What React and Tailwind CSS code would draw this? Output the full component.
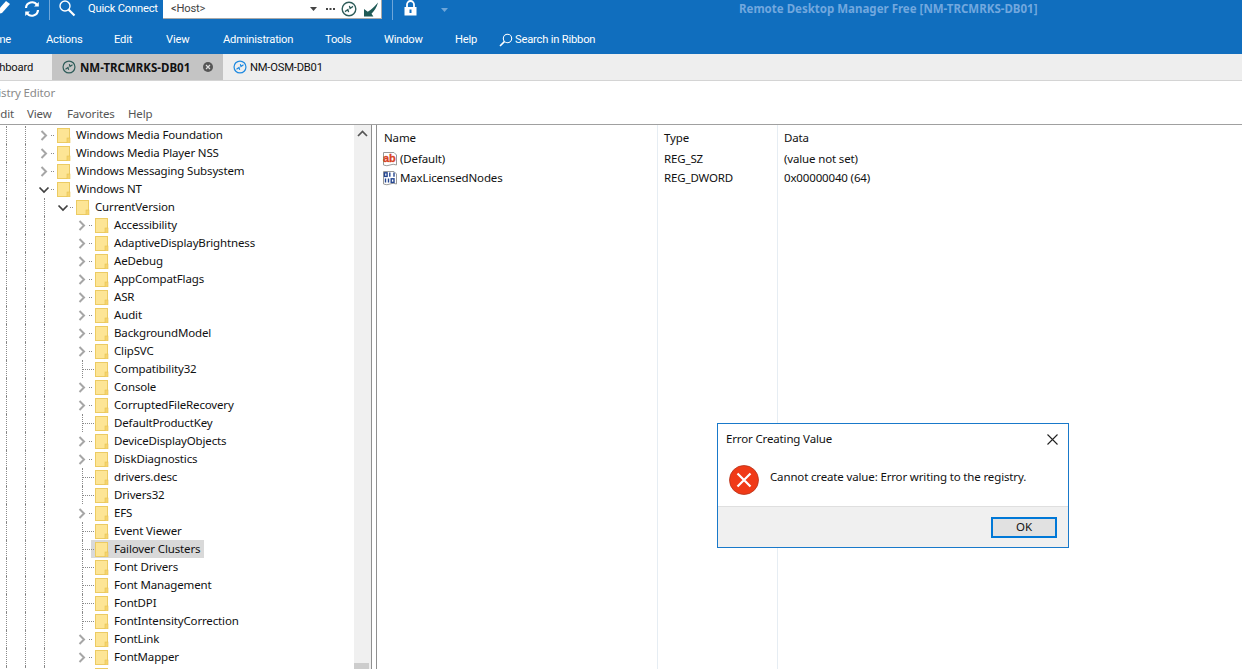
import React from 'react';

const treeRows = [
  { level: 2, kind: 'closed', label: 'Windows Media Foundation' },
  { level: 2, kind: 'closed', label: 'Windows Media Player NSS' },
  { level: 2, kind: 'closed', label: 'Windows Messaging Subsystem' },
  { level: 2, kind: 'open', label: 'Windows NT' },
  { level: 3, kind: 'open', label: 'CurrentVersion' },
  { level: 4, kind: 'closed', label: 'Accessibility' },
  { level: 4, kind: 'closed', label: 'AdaptiveDisplayBrightness' },
  { level: 4, kind: 'closed', label: 'AeDebug' },
  { level: 4, kind: 'closed', label: 'AppCompatFlags' },
  { level: 4, kind: 'closed', label: 'ASR' },
  { level: 4, kind: 'closed', label: 'Audit' },
  { level: 4, kind: 'closed', label: 'BackgroundModel' },
  { level: 4, kind: 'closed', label: 'ClipSVC' },
  { level: 4, kind: 'leaf', label: 'Compatibility32' },
  { level: 4, kind: 'closed', label: 'Console' },
  { level: 4, kind: 'closed', label: 'CorruptedFileRecovery' },
  { level: 4, kind: 'leaf', label: 'DefaultProductKey' },
  { level: 4, kind: 'closed', label: 'DeviceDisplayObjects' },
  { level: 4, kind: 'closed', label: 'DiskDiagnostics' },
  { level: 4, kind: 'leaf', label: 'drivers.desc' },
  { level: 4, kind: 'leaf', label: 'Drivers32' },
  { level: 4, kind: 'closed', label: 'EFS' },
  { level: 4, kind: 'leaf', label: 'Event Viewer' },
  { level: 4, kind: 'leaf', label: 'Failover Clusters', selected: true },
  { level: 4, kind: 'leaf', label: 'Font Drivers' },
  { level: 4, kind: 'leaf', label: 'Font Management' },
  { level: 4, kind: 'leaf', label: 'FontDPI' },
  { level: 4, kind: 'leaf', label: 'FontIntensityCorrection' },
  { level: 4, kind: 'closed', label: 'FontLink' },
  { level: 4, kind: 'closed', label: 'FontMapper' },
  { level: 4, kind: 'closed', label: 'FontSubstitutes' },
];

const menus = [
  { label: 'Actions', cls: 'w-[68px]' },
  { label: 'Edit', cls: 'w-[52px]' },
  { label: 'View', cls: 'w-[57px]' },
  { label: 'Administration', cls: 'w-[102px]' },
  { label: 'Tools', cls: 'w-[59px]' },
  { label: 'Window', cls: 'w-[71px]' },
  { label: 'Help', cls: 'w-[44px]' },
];

function RdpIcon({ color = '#2f5d5a', size = 16 }) {
  return (
    <svg width={size} height={size} viewBox="0 0 16 16" fill="none" className="shrink-0">
      <circle cx="8" cy="8" r="6.8" stroke={color} strokeWidth="1.4" />
      <path d="M4 10.6 L6.9 8.5 L7.6 11.2 M12 5.4 L9.1 7.5 L8.4 4.8" stroke={color} strokeWidth="1.3" />
    </svg>
  );
}

function Folder() {
  return (
    <svg width="14" height="15" viewBox="0 0 14 15" className="shrink-0">
      <rect x="0.5" y="0.5" width="12" height="14" fill="#fde595" stroke="#eccb63" />
      <rect x="10" y="10" width="3" height="5" fill="#f6d46f" stroke="#e6c252" strokeWidth="0.6" />
    </svg>
  );
}

function Connector({ kind }) {
  return (
    <div className="relative w-[13px] h-full shrink-0">
      {kind === 'leaf' && <div className="h-full border-l border-dotted border-[#8a8a8a]" />}
      <svg width="26" height="18" viewBox="-13 0 26 18" className="absolute left-[-13px] top-0 overflow-visible">
        {kind !== 'leaf' && <path d="M7 9.5 H10" stroke="#8a8a8a" strokeDasharray="1 1" />}
        {kind === 'leaf' && <path d="M1 9.5 H12" stroke="#8a8a8a" strokeDasharray="1 1" />}
        {kind === 'closed' && <path d="M-2.5 5 L2 9.5 L-2.5 14" fill="none" stroke="#a6a6a6" strokeWidth="2" />}
        {kind === 'open' && <path d="M-4.5 7.5 L0 12 L4.5 7.5" fill="none" stroke="#404040" strokeWidth="1.7" />}
      </svg>
    </div>
  );
}

function TreeRow({ level, kind, label, selected }) {
  const guides = [];
  for (let i = 0; i < level; i++) {
    // CurrentVersion is the last child, so nothing runs down at its level
    guides.push(
      <div key={i} className={`w-[19px] h-full shrink-0 ${i === 3 ? '' : 'border-l border-dotted border-[#8a8a8a]'}`} />
    );
  }
  return (
    <div className="flex items-center h-[18px] shrink-0">
      {guides}
      <Connector kind={kind} />
      <div className={`flex items-center h-[18px] ${selected ? 'bg-[#d9d9d9] ml-[-4px] pl-[4px] pr-[4px]' : ''}`}>
        <Folder />
        <span className="ml-[5px] whitespace-nowrap leading-[18px] text-[#111]">{label}</span>
      </div>
    </div>
  );
}

function ValueIcon({ type }) {
  return (
    <svg width="16" height="16" viewBox="0 0 16 16" className="shrink-0">
      <path d="M1.5 1.5 H12 L14.5 4 V14 Q11 12.5 8 14 T1.5 14 Z" fill="#fff" stroke="#9a9a9a" />
      {type === 'sz' ? (
        <text x="1" y="11" fontSize="11" fontWeight="700" letterSpacing="0" fill="#d9431f" stroke="#d9431f" strokeWidth="0.3" className="font-['Liberation_Sans',sans-serif]">ab</text>
      ) : (
        <g fill="none" stroke="#24458f" strokeWidth="1.4">
          <rect x="2.5" y="2.8" width="2.6" height="3.6" />
          <path d="M7.8 2.5 V6.8 M12 2.5 V6.8 M3.5 8.5 V12.5 M6.5 8.5 V12.5" />
          <rect x="9.2" y="8.8" width="2.8" height="3.6" />
        </g>
      )}
    </svg>
  );
}

export default function App() {
  return (
    <div className="relative w-[1242px] h-[669px] overflow-hidden bg-white text-[11.5px] tracking-[-0.15px] text-[#111] font-['Noto_Sans',sans-serif]">
      {/* Ribbon */}
      <div className="h-[54px] bg-[#106ebe] text-white text-[11.2px] font-['Roboto',sans-serif] tracking-[-0.2px]">
        <div className="flex items-start h-[20px]">
          <svg width="12" height="14" viewBox="0 0 12 14" className="ml-[-2px] shrink-0">
            <path d="M0 10 L8 1 L12 4 L4 13 L0 14 Z" fill="#fff" />
          </svg>
          <svg width="16" height="16" viewBox="0 0 16 16" fill="none" className="ml-[14px] mt-[1px] shrink-0" stroke="#fff" strokeWidth="2.2">
            <path d="M2 7 A6 6 0 0 1 13 4" />
            <path d="M14 9 A6 6 0 0 1 3 12" />
            <path d="M14.8 1 V5.6 H10 Z M1.2 15 V10.4 H6 Z" fill="#fff" stroke="none" />
          </svg>
          <div className="ml-[9px] w-px h-[20px] bg-[#6ea6d9] shrink-0" />
          <svg width="17" height="17" viewBox="0 0 17 17" fill="none" className="ml-[9px] shrink-0" stroke="#fff">
            <circle cx="6" cy="6" r="5" strokeWidth="1.4" />
            <path d="M9.5 9.5 L15.5 15.5" strokeWidth="2.2" />
          </svg>
          <span className="ml-[12px] w-[75px] leading-[18px] whitespace-nowrap shrink-0">Quick Connect</span>
          <div className="w-[219px] h-[19px] bg-white border-b border-r border-[#a9a9a9] flex items-center text-[#444] shrink-0">
            <span className="ml-[8px] w-[139px] shrink-0">&lt;Host&gt;</span>
            <svg width="7" height="4" viewBox="0 0 7 4" className="shrink-0"><path d="M0 0 H7 L3.5 4 Z" fill="#444" /></svg>
            <svg width="9" height="3" viewBox="0 0 9 3" className="ml-[9px] shrink-0"><path d="M0 0 H2 V2 H0 Z M3.5 0 H5.5 V2 H3.5 Z M7 0 H9 V2 H7 Z" fill="#444" /></svg>
            <div className="ml-[6px] shrink-0"><RdpIcon /></div>
            <svg width="15" height="15" viewBox="0 0 16 15" className="ml-[7px] shrink-0"><path d="M0 15 V7 L4 10 Q9 7 15 0 Q13 7 8 12 L10 15 Z" fill="#1f5a56" /></svg>
          </div>
          <div className="ml-[10px] w-px h-[20px] bg-[#6ea6d9] shrink-0" />
          <svg width="13" height="16" viewBox="0 0 13 16" className="ml-[11px] shrink-0">
            <path d="M3 7 V4.5 A3.5 3.5 0 0 1 10 4.5 V7" fill="none" stroke="#fff" strokeWidth="1.8" />
            <rect x="0.5" y="7" width="12" height="8.5" fill="#fff" />
            <rect x="5.5" y="9.5" width="2" height="3.5" fill="#106ebe" />
          </svg>
          <svg width="7" height="4" viewBox="0 0 7 4" className="ml-[24px] mt-[8px] shrink-0"><path d="M0 0 H7 L3.5 4 Z" fill="#6ea6d9" /></svg>
          <span className="ml-[291px] text-[11.5px] leading-[18px] font-bold tracking-normal text-[#72a8de] whitespace-nowrap font-['Noto_Sans',sans-serif]">Remote Desktop Manager Free [NM-TRCMRKS-DB01]</span>
        </div>
        <div className="flex items-center h-[34px] pt-[6px]">
          <div className="w-[46px] pr-[35px] flex justify-end shrink-0 whitespace-nowrap">Home</div>
          {menus.map((m) => (
            <span key={m.label} className={`${m.cls} whitespace-nowrap shrink-0`}>{m.label}</span>
          ))}
          <svg width="14" height="14" viewBox="0 0 14 14" fill="none" stroke="#fff" className="shrink-0">
            <circle cx="8.5" cy="5.5" r="4.2" strokeWidth="1.1" />
            <path d="M5.4 8.6 L1 13" strokeWidth="1.6" />
          </svg>
          <span className="ml-[2px] whitespace-nowrap">Search in Ribbon</span>
        </div>
      </div>

      {/* Tabs */}
      <div className="flex items-center h-[27px] bg-[#eeeeee] border-b border-[#d4d4d4] text-[11.2px] font-['Roboto',sans-serif] tracking-[-0.2px]">
        <div className="w-[52px] pr-[19px] pt-[2px] flex justify-end shrink-0 whitespace-nowrap">Dashboard</div>
        <div className="flex items-center w-[171px] h-full bg-[#c4c4c4] shrink-0">
          <div className="ml-[10px]"><RdpIcon size={14} /></div>
          <span className="ml-[4px] pt-[2px] text-[11.5px] font-bold whitespace-nowrap tracking-normal font-['Noto_Sans',sans-serif]">NM-TRCMRKS-DB01</span>
          <div className="ml-auto mr-[10px] w-[10px] h-[10px] rounded-full bg-[#555] flex items-center justify-center">
            <svg width="6" height="6" viewBox="0 0 6 6"><path d="M1 1 L5 5 M5 1 L1 5" stroke="#ddd" strokeWidth="1.2" /></svg>
          </div>
        </div>
        <div className="ml-[10px]"><RdpIcon color="#1f8ae0" size={14} /></div>
        <span className="ml-[3px] pt-[2px] whitespace-nowrap">NM-OSM-DB01</span>
      </div>

      {/* Registry editor title and menu */}
      <div className="h-[43px] bg-white text-[#555]">
        <div className="h-[23px] flex items-center">
          <div className="w-[55px] flex justify-end shrink-0 whitespace-nowrap text-[#8a8a8a]">Registry Editor</div>
        </div>
        <div className="h-[20px] flex items-center">
          <div className="w-[14px] flex justify-end shrink-0">Edit</div>
          <span className="ml-[13px] w-[40px] shrink-0">View</span>
          <span className="w-[61px] shrink-0">Favorites</span>
          <span>Help</span>
        </div>
      </div>

      {/* Panes */}
      <div className="flex h-[545px] border-t border-[#a0a0a0]">
        <div className="flex w-[372px] border-r border-[#8f8f8f] shrink-0">
          <div className="w-[354px] h-full overflow-hidden pl-[6px] pt-[1px] flex flex-col shrink-0">
            {treeRows.map((r) => (
              <TreeRow key={r.label} {...r} />
            ))}
          </div>
          <div className="w-[17px] h-full bg-[#f0f0f0] relative shrink-0">
            <svg width="11" height="7" viewBox="0 0 11 7" className="mt-[5px] ml-[3px]">
              <path d="M1 6 L5.5 1.5 L10 6" fill="none" stroke="#555" strokeWidth="1.7" />
            </svg>
            <div className="absolute left-0 bottom-0 w-[15px] h-[6px] bg-[#cdcdcd]" />
          </div>
        </div>
        <div className="w-[4px] shrink-0" />
        <div className="flex-1 border-l border-[#8f8f8f] grid grid-cols-[281px_120px_1fr]">
          <div className="border-r border-[#e6edf3]">
            <div className="h-[24px] pt-[2px] pl-[7px] flex items-center">Name</div>
            <div className="h-[19px] pl-[5px] flex items-center gap-[2px]"><ValueIcon type="sz" /><span>(Default)</span></div>
            <div className="h-[19px] pl-[5px] flex items-center gap-[2px]"><ValueIcon type="dword" /><span>MaxLicensedNodes</span></div>
          </div>
          <div className="border-r border-[#e6edf3] pl-[6px]">
            <div className="h-[24px] pt-[2px] flex items-center">Type</div>
            <div className="h-[19px] flex items-center">REG_SZ</div>
            <div className="h-[19px] flex items-center">REG_DWORD</div>
          </div>
          <div className="pl-[6px]">
            <div className="h-[24px] pt-[2px] flex items-center">Data</div>
            <div className="h-[19px] flex items-center">(value not set)</div>
            <div className="h-[19px] flex items-center">0x00000040 (64)</div>
          </div>
        </div>
      </div>

      {/* Error dialog */}
      <div className="absolute left-[717px] top-[423px] w-[352px] h-[125px] bg-white border border-[#1979ca] flex flex-col">
        <div className="flex items-center justify-between h-[30px] pl-[8px] pr-[10px]">
          <span>Error Creating Value</span>
          <svg width="11" height="11" viewBox="0 0 11 11"><path d="M0.5 0.5 L10.5 10.5 M10.5 0.5 L0.5 10.5" stroke="#222" strokeWidth="1.1" /></svg>
        </div>
        <div className="flex flex-1 items-start pl-[11px] pt-[11px]">
          <svg width="30" height="30" viewBox="0 0 30 30" className="shrink-0">
            <circle cx="15" cy="15" r="14.5" fill="#f03a17" stroke="#b5331a" strokeWidth="0.8" />
            <path d="M8.5 8.5 L21.5 21.5 M21.5 8.5 L8.5 21.5" stroke="#fff" strokeWidth="2.2" />
          </svg>
          <span className="ml-[11px] mt-[3px] whitespace-nowrap">Cannot create value: Error writing to the registry.</span>
        </div>
        <div className="h-[41px] bg-[#f0f0f0] border-t border-[#dfdfdf] flex items-center justify-end pr-[11px]">
          <div className="w-[66px] h-[21px] bg-[#e1e1e1] border-2 border-[#0078d7] flex items-center justify-center">OK</div>
        </div>
      </div>
    </div>
  );
}
